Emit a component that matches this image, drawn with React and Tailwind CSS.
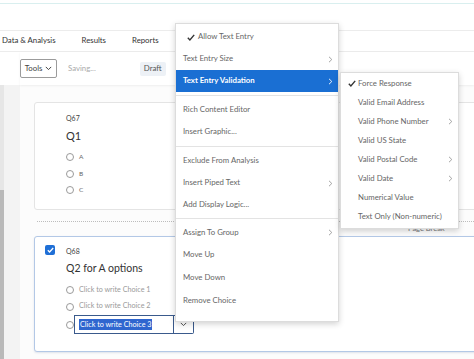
import React from "react";

const Chev = ({ className = "" }) => (
  <svg width="5" height="7" viewBox="0 0 5 7" className={className}>
    <path d="M1 0.8 L3.8 3.5 L1 6.2" fill="none" stroke="currentColor" strokeWidth="0.9" />
  </svg>
);

const Check = ({ className = "" }) => (
  <svg width="8" height="7" viewBox="0 0 8 7" className={className}>
    <path d="M0.8 3.8 L2.9 5.9 L7.2 0.9" fill="none" stroke="currentColor" strokeWidth="1.4" />
  </svg>
);

const Item = ({ label, chev, check, active, h = "h-[22px]" }) => (
  <div
    className={`${h} flex items-center pl-[7px] pr-[5px] ${
      active ? "bg-[#1a6fd3] text-white font-bold" : "text-[#666]"
    }`}
  >
    {check && <Check className="ml-[4px] mr-[3px] text-[#333]" />}
    <span className="flex-1">{label}</span>
    {chev && <Chev className={active ? "text-white" : "text-[#999]"} />}
  </div>
);

const Sep = ({ m = "my-[3px]" }) => <div className={`h-px bg-[#e3e3e3] ${m}`} />;

const SubItem = ({ label, chev, check }) => (
  <div className="h-[19px] flex items-center pr-[5px] text-[#666]">
    <div className="w-[17px] flex justify-end pr-[2px]">{check && <Check className="text-[#333]" />}</div>
    <span className="flex-1">{label}</span>
    {chev && <Chev className="text-[#999]" />}
  </div>
);

const Radio = () => <div className="w-[8px] h-[8px] rounded-full border border-[#9a9a9a] bg-white shrink-0" />;

export default function App() {
  return (
    <div className="relative w-[474px] h-[359px] overflow-hidden bg-white font-['Lato',sans-serif] text-[8px]">
      {/* header */}
      <div className="h-[30px]">
        <div className="h-[3px]" />
        <div className="h-px bg-[#d9efef]" />
      </div>
      {/* nav */}
      <div className="h-[22px] border-y border-[#ececec] flex items-center text-[#333] text-[7.8px]">
        <span className="ml-[2px]">Data &amp; Analysis</span>
        <span className="ml-[26px]">Results</span>
        <span className="ml-[26px]">Reports</span>
      </div>
      {/* body */}
      <div className="flex h-[307px]">
        <div className="w-[20px] shrink-0 flex bg-[#f3f3f3]">
          <div className="w-[4px] flex flex-col">
            <div className="h-[33px] bg-white" />
            <div className="h-[105px] bg-[#e6e6e6]" />
            <div className="flex-1 bg-[#b9b9b9]" />
          </div>
          <div className="flex-1 flex flex-col">
            <div className="h-[33px] bg-white" />
          </div>
        </div>
        <div className="flex-1 min-w-0 flex flex-col bg-[#fcfcfc]">
          {/* toolbar */}
          <div className="h-[33px] shrink-0 flex items-center bg-white shadow-[0_1px_2px_rgba(0,0,0,0.06)]">
            <div className="w-[37px] h-[19px] shrink-0 border border-[#9b9b9b] rounded-[2px] flex items-center justify-center gap-[3px] text-[#444] text-[7.8px]">
              Tools
              <svg width="7" height="5" viewBox="0 0 7 5">
                <path d="M0.8 0.9 L3.5 3.6 L6.2 0.9" fill="none" stroke="#444" strokeWidth="1" />
              </svg>
            </div>
            <span className="ml-[11px] text-[#aaa] text-[7.8px]">Saving...</span>
            <span className="ml-[44px] px-[4px] h-[14px] flex items-center bg-[#edf1f6] text-[#555] rounded-[2px] text-[7.8px]">Draft</span>
          </div>
          {/* canvas */}
          <div className="pl-[14px] pt-[17px] flex flex-col">
            {/* Q67 */}
            <div className="w-[460px] shrink-0 h-[108px] bg-white border border-[#e4e4e4] rounded-[3px] flex">
              <div className="w-[31px] shrink-0" />
              <div className="flex flex-col pt-[10px]">
                <div className="h-[10px] leading-[10px] text-[7px] text-[#444]">Q67</div>
                <div className="mt-[5px] h-[16px] leading-[16px] text-[11px] text-[#333]">Q1</div>
                <div className="mt-[5px] flex flex-col">
                  {["A", "B", "C"].map((c) => (
                    <div key={c} className="h-[16.5px] flex items-center gap-[5px] text-[6.5px] text-[#666]">
                      <Radio />
                      {c}
                    </div>
                  ))}
                </div>
              </div>
            </div>
            {/* page break */}
            <div className="h-[26px] shrink-0 relative w-[460px]">
              <div className="absolute left-[3px] right-0 top-[11px] border-t border-dotted border-[#bdbdbd]" />
              <div className="absolute left-[374px] top-[13px] text-[7.5px] text-[#777]">Page Break</div>
            </div>
            {/* Q68 */}
            <div className="w-[460px] shrink-0 h-[116px] bg-white border border-[#b3c8e6] rounded-[3px] flex shadow-[0_1px_2px_rgba(60,90,140,0.15)]">
              <div className="w-[31px] shrink-0 pl-[10px] pt-[8px]">
                <div className="w-[10px] h-[10px] rounded-[2px] bg-[#1f6fd6] flex items-center justify-center">
                  <svg width="7" height="6" viewBox="0 0 7 6">
                    <path d="M0.8 3.2 L2.6 5 L6.2 1" fill="none" stroke="white" strokeWidth="1.3" />
                  </svg>
                </div>
              </div>
              <div className="flex flex-col pt-[9px]">
                <div className="h-[10px] leading-[10px] text-[7px] text-[#444]">Q68</div>
                <div className="mt-[4px] h-[16px] leading-[16px] text-[10.5px] text-[#333]">Q2 for A options</div>
                <div className="mt-[6px] flex flex-col">
                  <div className="h-[16.5px] flex items-center gap-[5px] text-[7.2px] text-[#9a9a9a]">
                    <Radio />
                    Click to write Choice 1
                  </div>
                  <div className="h-[16.5px] flex items-center gap-[5px] text-[7.2px] text-[#9a9a9a]">
                    <Radio />
                    Click to write Choice 2
                  </div>
                  <div className="h-[19px] flex items-center text-[7.2px]">
                    <Radio />
                    <div className="w-[100px] h-[19px] border border-[#3a5a8c] flex items-center pl-[4px]">
                      <span className="bg-[#2f66cf] text-white leading-[11px] px-px">Click to write Choice 3</span>
                    </div>
                    <div className="w-[20px] h-[19px] border border-l-0 border-[#3a5a8c] rounded-r-[2px] flex items-center justify-center">
                      <svg width="7" height="5" viewBox="0 0 7 5">
                        <path d="M0.8 0.9 L3.5 3.6 L6.2 0.9" fill="none" stroke="#555" strokeWidth="1" />
                      </svg>
                    </div>
                  </div>
                </div>
              </div>
            </div>
          </div>
        </div>
      </div>

      {/* context menu */}
      <div className="absolute left-[175px] top-[23px] w-[164px] bg-white border border-[#dcdcdc] shadow-[0_2px_6px_rgba(0,0,0,0.18)] pt-[2px] pb-[9px] text-[7.8px]">
        <Item label="Allow Text Entry" check />
        <Item label="Text Entry Size" chev />
        <Item label="Text Entry Validation" chev active />
        <Sep />
        <Item label="Rich Content Editor" />
        <Item label="Insert Graphic..." />
        <Sep />
        <Item label="Exclude From Analysis" />
        <Item label="Insert Piped Text" chev />
        <Item label="Add Display Logic..." />
        <Sep m="mt-[2px] mb-[2px]" />
        <Item label="Assign To Group" chev h="h-[22.7px]" />
        <Item label="Move Up" h="h-[22.7px]" />
        <Item label="Move Down" h="h-[22.7px]" />
        <Item label="Remove Choice" h="h-[22.7px]" />
      </div>

      {/* submenu */}
      <div className="absolute left-[340px] top-[72px] w-[119px] bg-white border border-[#dcdcdc] shadow-[0_2px_6px_rgba(0,0,0,0.18)] pt-[1px] pb-[2px] text-[7.8px]">
        <SubItem label="Force Response" check />
        <SubItem label="Valid Email Address" />
        <SubItem label="Valid Phone Number" chev />
        <SubItem label="Valid US State" />
        <SubItem label="Valid Postal Code" chev />
        <SubItem label="Valid Date" chev />
        <SubItem label="Numerical Value" />
        <SubItem label="Text Only (Non-numeric)" />
      </div>
    </div>
  );
}
